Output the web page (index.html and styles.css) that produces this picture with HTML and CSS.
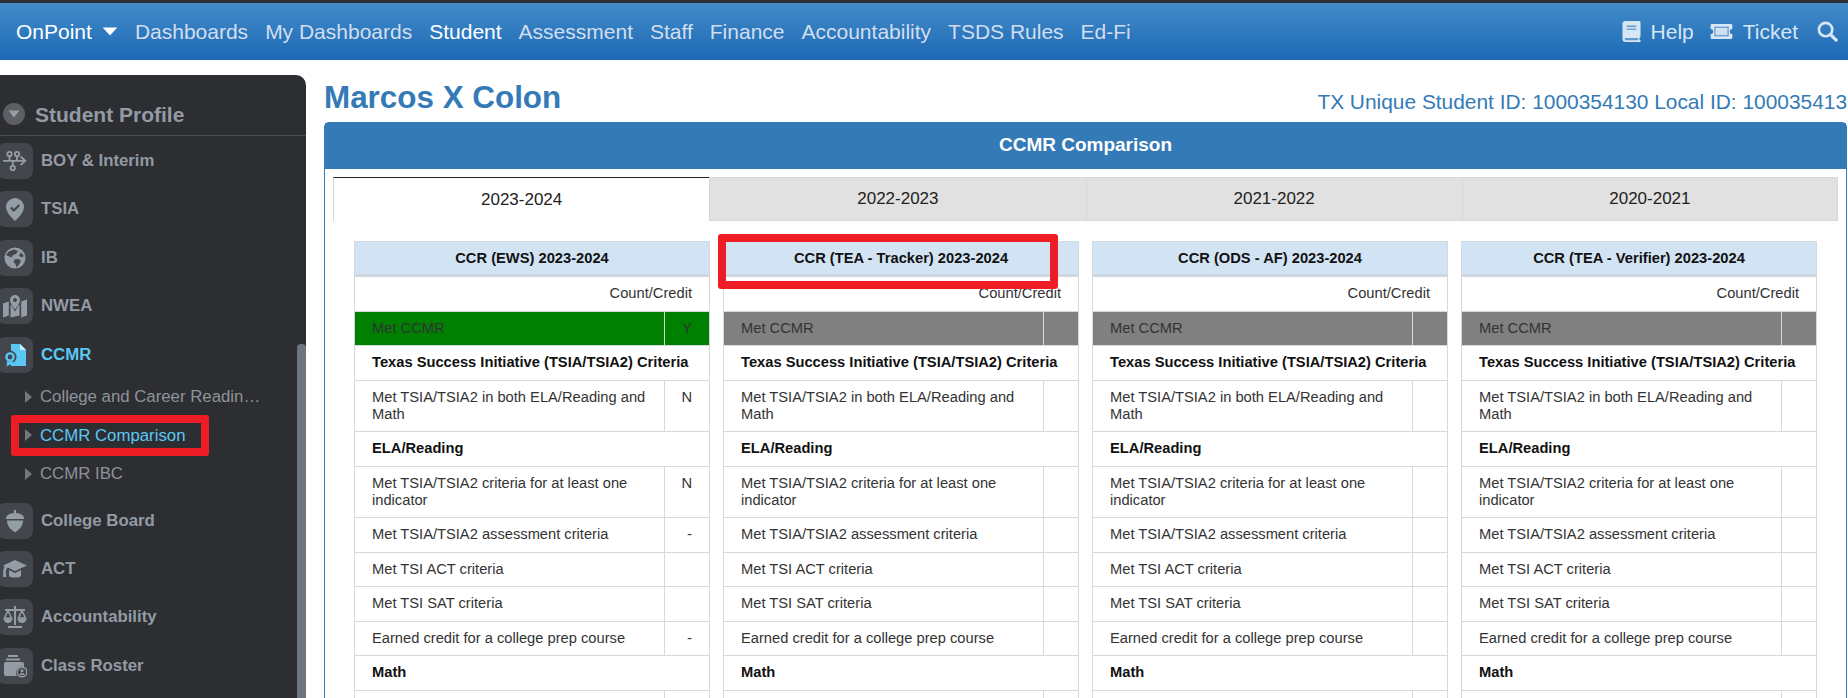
FILE: index.html
```html
<!DOCTYPE html>
<html lang="en">
<head>
<meta charset="utf-8">
<title>CCMR Comparison</title>
<link rel="stylesheet" href="styles.css">
</head>
<body>
<header class="topbar">
  <nav class="nav-left">
    <a class="nav-link is-on brand">OnPoint <svg class="caret" viewBox="0 0 14 8"><path d="M0.5 0.5h13L7 7.5z"/></svg></a>
    <a class="nav-link">Dashboards</a>
    <a class="nav-link">My Dashboards</a>
    <a class="nav-link is-on">Student</a>
    <a class="nav-link">Assessment</a>
    <a class="nav-link">Staff</a>
    <a class="nav-link">Finance</a>
    <a class="nav-link">Accountability</a>
    <a class="nav-link">TSDS Rules</a>
    <a class="nav-link">Ed-Fi</a>
  </nav>
  <nav class="nav-right">
    <a class="nav-link tool"><svg class="tool-icon book" viewBox="0 0 20 24"><path fill="#d6e6f5" d="M4 1h14a1.500 1.500 0 0 1 1.500 1.500V17a1.500 1.500 0 0 1-1 1.400V21h1v2H4a3.500 3.500 0 0 1-3.500-3.500v-15A3.500 3.500 0 0 1 4 1z"/><path stroke="#5f97cf" stroke-width="1.400" d="M5 6.500h10M5 9.500h10"/><path fill="#5f97cf" d="M4 18.800h13v2.300H4a1.150 1.150 0 0 1 0-2.300z"/></svg>Help</a>
    <a class="nav-link tool"><svg class="tool-icon ticket" viewBox="0 0 24 18"><path fill="#d6e6f5" d="M2 1h20a1.500 1.500 0 0 1 1.500 1.500v3.800a2.700 2.700 0 0 0 0 5.400v3.800A1.500 1.500 0 0 1 22 17H2a1.500 1.500 0 0 1-1.500-1.500v-3.800a2.700 2.700 0 0 0 0-5.400V2.500A1.500 1.500 0 0 1 2 1z"/><rect x="5" y="4.500" width="14" height="9" fill="#cfe0f1" stroke="#5f8fc8" stroke-width="1.200"/></svg>Ticket</a>
    <a class="search"><svg viewBox="0 0 22 22"><circle cx="9" cy="9" r="7" fill="none" stroke="#d6e6f5" stroke-width="2.800"/><path stroke="#d6e6f5" stroke-width="3.400" stroke-linecap="round" d="M14.500 14.500l5.500 5.500"/></svg></a>
  </nav>
</header>

<div class="shell">
  <aside class="sidebar">
    <div class="side-head">
      <span class="side-toggle"><svg viewBox="0 0 12 8"><path d="M0.500 0.500h11L6 7.500z"/></svg></span>
      <span class="side-title">Student Profile</span>
    </div>
    <ul class="side-list">
      <li class="side-item"><span class="tile"><svg viewBox="0 0 24 24" fill="none" stroke="#949da6" stroke-width="1.800"><circle cx="6.500" cy="5" r="2.200"/><circle cx="14" cy="5" r="2.200"/><circle cx="9.800" cy="19" r="2.200"/><path d="M0 11.800h21.500M17.500 7.500l4.800 4.300-4.800 4.300M6.500 7.500v4.300M14 7.500v4.300M9.800 11.800v5"/></svg></span>BOY &amp; Interim</li>
      <li class="side-item"><span class="tile"><svg viewBox="0 0 24 24"><path fill="#949da6" d="M12 1a9 9 0 0 1 9 9c0 5-5 10-9 14C8 20 3 15 3 10a9 9 0 0 1 9-9z"/><path fill="none" stroke="#43464c" stroke-width="2.200" d="M7.800 10.500l3 3 5.500-5.500"/></svg></span>TSIA</li>
      <li class="side-item"><span class="tile"><svg viewBox="0 0 24 24"><circle cx="12" cy="12" r="10.500" fill="#949da6"/><path fill="#43464c" d="M6 5.500l5-2 4 1.500-2 3-3 1-1.500 2.500-3.500-1.500-2-1zM11.500 13.500l4-.5 2.500 2-2 3.500-2.500 3-1-3.500-2-2zM18 6.500l3 3.500-2.500 1.500-2.500-2z"/></svg></span>IB</li>
      <li class="side-item"><span class="tile"><svg viewBox="0 0 24 24"><path fill="#949da6" d="M0 9.500l5.800-2v14L0 23.500zM7.500 11l1 .5 3.500 6 3.500-6 1-.5v10.500L7.500 23.500zM18.200 7.500L24 5.500v16l-5.800 2z"/><path fill="#949da6" fill-rule="evenodd" d="M12 1a5 5 0 0 1 5 5c0 3-3 7-5 9.500C10 13 7 9 7 6a5 5 0 0 1 5-5zm0 3a2 2 0 1 0 0 4 2 2 0 0 0 0-4z"/></svg></span>NWEA</li>
      <li class="side-item is-active"><span class="tile"><svg viewBox="0 0 24 24"><path fill="#5ac8f5" d="M8 1h9l6 6v16H8z"/><path fill="#c8eefb" d="M17 1l6 6h-6z"/><circle cx="7" cy="14" r="6.500" fill="#43464c"/><circle cx="7" cy="14" r="3.600" fill="none" stroke="#5ac8f5" stroke-width="2.400"/><path fill="#5ac8f5" d="M3.800 18.500h6.400v5L7 21.500l-3.200 2z"/></svg></span>CCMR</li>
      <li class="sub-wrap">
        <ul class="sub-list">
          <li class="sub-item"><span class="sub-text">College and Career Readiness Indicators</span></li>
          <li class="sub-item is-active"><span class="sub-text">CCMR Comparison</span><span class="side-mark"></span></li>
          <li class="sub-item"><span class="sub-text">CCMR IBC</span></li>
        </ul>
      </li>
      <li class="side-item"><span class="tile"><svg viewBox="0 0 24 24"><path fill="#949da6" d="M11 1h2v3h-2z"/><path fill="#949da6" d="M3 9a9 5 0 0 1 18 0v1H3z"/><path fill="#949da6" d="M4 11.500h16c0 6-4 9-8 12-4-3-8-6-8-12z"/></svg></span>College Board</li>
      <li class="side-item"><span class="tile"><svg viewBox="0 0 24 24"><path fill="#949da6" d="M12 3L24 8.500 12 14 4.500 10.500 2 15l-2-.5 1.500-5.500L0 8.500z"/><path fill="#949da6" d="M6 13l6 3 6-3v6c-2 2-10 2-12 0zM0.800 12h1.600l1 8H0z"/></svg></span>ACT</li>
      <li class="side-item"><span class="tile"><svg viewBox="0 0 24 24"><path stroke="#949da6" stroke-width="2" d="M12 1v19M2 5h20M5 22h14"/><path fill="none" stroke="#949da6" stroke-width="1.500" d="M5 5.500L1.500 13h7zM19 5.500L15.500 13h7z"/><path fill="#949da6" d="M0.500 13.500h9A4.500 4.500 0 0 1 .5 13.500zM14.500 13.500h9a4.500 4.500 0 0 1-9 0z"/></svg></span>Accountability</li>
      <li class="side-item"><span class="tile"><svg viewBox="0 0 24 24"><path fill="#949da6" d="M5 1h10v2H5zM3 4.500h14v2H3zM3 8h16a2 2 0 0 1 2 2v3a6 6 0 0 0-7 9H3a2 2 0 0 1-2-2V10a2 2 0 0 1 2-2z"/><circle cx="19" cy="18" r="4.800" fill="none" stroke="#949da6" stroke-width="1.400"/><circle cx="19" cy="16.800" r="1.500" fill="#949da6"/><path fill="#949da6" d="M16.500 21a2.500 2 0 0 1 5 0z"/></svg></span>Class Roster</li>
    </ul>
    <span class="side-scroll"></span>
  </aside>

  <main class="content">
    <div class="title-row">
      <h1 class="student-name">Marcos X Colon</h1>
      <div class="student-ids">TX Unique Student ID: 1000354130 Local ID: 100035413</div>
    </div>
    <section class="panel">
      <div class="panel-head">CCMR Comparison</div>
      <div class="panel-body">
        <div class="tabs">
          <div class="tab is-active">2023-2024</div>
          <div class="tab">2022-2023</div>
          <div class="tab">2021-2022</div>
          <div class="tab">2020-2021</div>
        </div>
        <div class="compare">

          <div class="compare-col wide-val">
            <table class="ccr">
              <colgroup><col><col class="val-col"></colgroup>
              <tr><th colspan="2">CCR (EWS) 2023-2024</th></tr>
              <tr><td colspan="2" class="val">Count/Credit</td></tr>
              <tr class="met green"><td>Met CCMR</td><td class="val sep">Y</td></tr>
              <tr class="sec"><td colspan="2">Texas Success Initiative (TSIA/TSIA2) Criteria</td></tr>
              <tr class="two"><td>Met TSIA/TSIA2 in both ELA/Reading and Math</td><td class="val sep">N</td></tr>
              <tr class="sec"><td colspan="2">ELA/Reading</td></tr>
              <tr class="two"><td>Met TSIA/TSIA2 criteria for at least one indicator</td><td class="val sep">N</td></tr>
              <tr><td>Met TSIA/TSIA2 assessment criteria</td><td class="val sep">-</td></tr>
              <tr><td>Met TSI ACT criteria</td><td class="val sep"></td></tr>
              <tr><td>Met TSI SAT criteria</td><td class="val sep"></td></tr>
              <tr><td>Earned credit for a college prep course</td><td class="val sep">-</td></tr>
              <tr class="sec"><td colspan="2">Math</td></tr>
              <tr class="stub"><td></td><td class="val sep"></td></tr>
            </table>
          </div>

          <div class="compare-col">
            <table class="ccr">
              <colgroup><col><col class="val-col"></colgroup>
              <tr><th colspan="2">CCR (TEA - Tracker) 2023-2024</th></tr>
              <tr><td colspan="2" class="val">Count/Credit</td></tr>
              <tr class="met"><td>Met CCMR</td><td class="val sep"></td></tr>
              <tr class="sec"><td colspan="2">Texas Success Initiative (TSIA/TSIA2) Criteria</td></tr>
              <tr class="two"><td>Met TSIA/TSIA2 in both ELA/Reading and Math</td><td class="val sep"></td></tr>
              <tr class="sec"><td colspan="2">ELA/Reading</td></tr>
              <tr class="two"><td>Met TSIA/TSIA2 criteria for at least one indicator</td><td class="val sep"></td></tr>
              <tr><td>Met TSIA/TSIA2 assessment criteria</td><td class="val sep"></td></tr>
              <tr><td>Met TSI ACT criteria</td><td class="val sep"></td></tr>
              <tr><td>Met TSI SAT criteria</td><td class="val sep"></td></tr>
              <tr><td>Earned credit for a college prep course</td><td class="val sep"></td></tr>
              <tr class="sec"><td colspan="2">Math</td></tr>
              <tr class="stub"><td></td><td class="val sep"></td></tr>
            </table>
            <span class="table-mark"></span>
          </div>

          <div class="compare-col">
            <table class="ccr">
              <colgroup><col><col class="val-col"></colgroup>
              <tr><th colspan="2">CCR (ODS - AF) 2023-2024</th></tr>
              <tr><td colspan="2" class="val">Count/Credit</td></tr>
              <tr class="met"><td>Met CCMR</td><td class="val sep"></td></tr>
              <tr class="sec"><td colspan="2">Texas Success Initiative (TSIA/TSIA2) Criteria</td></tr>
              <tr class="two"><td>Met TSIA/TSIA2 in both ELA/Reading and Math</td><td class="val sep"></td></tr>
              <tr class="sec"><td colspan="2">ELA/Reading</td></tr>
              <tr class="two"><td>Met TSIA/TSIA2 criteria for at least one indicator</td><td class="val sep"></td></tr>
              <tr><td>Met TSIA/TSIA2 assessment criteria</td><td class="val sep"></td></tr>
              <tr><td>Met TSI ACT criteria</td><td class="val sep"></td></tr>
              <tr><td>Met TSI SAT criteria</td><td class="val sep"></td></tr>
              <tr><td>Earned credit for a college prep course</td><td class="val sep"></td></tr>
              <tr class="sec"><td colspan="2">Math</td></tr>
              <tr class="stub"><td></td><td class="val sep"></td></tr>
            </table>
          </div>

          <div class="compare-col">
            <table class="ccr">
              <colgroup><col><col class="val-col"></colgroup>
              <tr><th colspan="2">CCR (TEA - Verifier) 2023-2024</th></tr>
              <tr><td colspan="2" class="val">Count/Credit</td></tr>
              <tr class="met"><td>Met CCMR</td><td class="val sep"></td></tr>
              <tr class="sec"><td colspan="2">Texas Success Initiative (TSIA/TSIA2) Criteria</td></tr>
              <tr class="two"><td>Met TSIA/TSIA2 in both ELA/Reading and Math</td><td class="val sep"></td></tr>
              <tr class="sec"><td colspan="2">ELA/Reading</td></tr>
              <tr class="two"><td>Met TSIA/TSIA2 criteria for at least one indicator</td><td class="val sep"></td></tr>
              <tr><td>Met TSIA/TSIA2 assessment criteria</td><td class="val sep"></td></tr>
              <tr><td>Met TSI ACT criteria</td><td class="val sep"></td></tr>
              <tr><td>Met TSI SAT criteria</td><td class="val sep"></td></tr>
              <tr><td>Earned credit for a college prep course</td><td class="val sep"></td></tr>
              <tr class="sec"><td colspan="2">Math</td></tr>
              <tr class="stub"><td></td><td class="val sep"></td></tr>
            </table>
          </div>

        </div>
      </div>
    </section>
  </main>
</div>
</body>
</html>
```

FILE: styles.css
```css
* { box-sizing: border-box; }

html, body {
  margin: 0;
  height: 100%;
  overflow: hidden;
}

body {
  display: flex;
  flex-direction: column;
  background: #fff;
  color: #333;
  font-family: "Liberation Sans", Arial, sans-serif;
}

/* top navigation */
.topbar {
  flex: none;
  height: 60px;
  display: flex;
  align-items: center;
  justify-content: space-between;
  border-top: 3px solid #2b2d31;
  padding: 0 10px 0 16px;
  background: linear-gradient(#428bca, #1d69b4);
}

.nav-left, .nav-right {
  display: flex;
  align-items: center;
  gap: 17px;
}

.nav-link {
  display: flex;
  align-items: center;
  font-size: 21px;
  line-height: 28px;
  color: #d2deef;
  white-space: nowrap;
}

.nav-link.is-on { color: #fff; }

.brand { gap: 10px; }

.caret {
  width: 16px;
  height: 9px;
  fill: #fff;
}

.nav-right { gap: 16px; }

.tool { gap: 10px; color: #d6e6f5; }

.tool-icon { flex: none; }
.book { width: 19px; height: 23px; }
.ticket { width: 23px; height: 17px; }

.search {
  display: flex;
  margin-left: 3px;
  width: 21px;
  height: 21px;
}

/* two-column shell */
.shell {
  flex: 1;
  min-height: 0;
  display: flex;
  gap: 18px;
  padding-top: 15px;
}

/* sidebar */
.sidebar {
  position: relative;
  flex: none;
  width: 306px;
  background: #2d2e32;
  border-top-right-radius: 10px;
  overflow: hidden;
  color: #929ba4;
}

.side-head {
  height: 61px;
  display: flex;
  align-items: flex-end;
  gap: 10px;
  padding: 0 0 10px 3px;
  border-bottom: 1px solid #4c4d51;
  font-size: 21px;
  font-weight: 700;
  line-height: 22px;
}

.side-title { margin-bottom: -1px; }

.side-toggle {
  width: 22px;
  height: 22px;
  border-radius: 50%;
  background: #5d5f64;
  display: flex;
  align-items: center;
  justify-content: center;
}

.side-toggle svg {
  width: 12px;
  height: 8px;
  fill: #979da4;
}

.side-list, .sub-list {
  list-style: none;
  margin: 0;
  padding: 0;
}

.side-list {
  display: flex;
  flex-direction: column;
  gap: 12.400px;
  padding-top: 7px;
}

.side-item {
  flex: none;
  height: 36px;
  display: flex;
  align-items: center;
  gap: 8px;
  font-size: 16.800px;
  font-weight: 700;
}

.side-item.is-active { color: #5ac8f5; }

.tile {
  flex: none;
  width: 36px;
  height: 36px;
  margin-left: -3px;
  border-radius: 8px;
  background: #43464c;
  display: flex;
  align-items: center;
  justify-content: center;
}

.tile svg {
  width: 24px;
  height: 24px;
}

.sub-wrap { margin: -7.600px 0 -2.700px; }

.sub-item {
  position: relative;
  height: 38.500px;
  display: flex;
  align-items: center;
  padding: 1px 40px 0 40px;
  font-size: 16.800px;
  color: #8d939a;
}

.sub-item::before {
  content: "";
  position: absolute;
  left: 25px;
  top: 50%;
  margin-top: -6px;
  border-left: 7px solid #74787e;
  border-top: 6px solid transparent;
  border-bottom: 6px solid transparent;
}

.sub-item.is-active { color: #5ac8f5; }

.sub-text {
  overflow: hidden;
  white-space: nowrap;
  text-overflow: ellipsis;
}

.side-mark {
  position: absolute;
  left: 11px;
  top: -1px;
  width: 198px;
  height: 41px;
  border: 8px solid #ee1c25;
  border-radius: 3px;
}

.side-scroll {
  position: absolute;
  right: 0;
  top: 269px;
  bottom: 0;
  width: 9px;
  background: #6f767f;
  border-top-left-radius: 4px;
  border-top-right-radius: 4px;
}

/* content */
.content {
  flex: 1;
  min-width: 0;
  padding-right: 1px;
  overflow: hidden;
}

.title-row {
  height: 47px;
  display: flex;
  justify-content: space-between;
  align-items: flex-start;
}

.student-name {
  margin: 0;
  padding-top: 4px;
  font-size: 31.400px;
  line-height: 38px;
  color: #337ab7;
  font-weight: 700;
}

.student-ids {
  padding-top: 15px;
  font-size: 20.900px;
  line-height: 23px;
  color: #337ab7;
  white-space: nowrap;
}

.panel {
  border: 1px solid #337ab7;
  border-top-left-radius: 5px;
  border-top-right-radius: 5px;
}

.panel-head {
  height: 46px;
  padding-bottom: 3px;
  display: flex;
  align-items: center;
  justify-content: center;
  background: #337ab7;
  color: #fff;
  font-size: 19px;
  font-weight: 700;
}

.panel-body { padding: 8px 8px 0; }

.tabs {
  display: grid;
  grid-template-columns: repeat(4, 1fr);
  height: 44px;
}

.tab {
  display: flex;
  align-items: center;
  justify-content: center;
  background: #e1e1e1;
  border: 1px solid #d5d8da;
  border-right-width: 0;
  font-size: 17px;
  color: #222;
}

.tab:last-child { border-right-width: 1px; }

.tab.is-active {
  background: #fff;
  border: 0;
  border-top: 1px solid #222;
  border-left: 1px solid #cfd6dc;
}

.compare {
  display: grid;
  grid-template-columns: repeat(4, 1fr);
  gap: 13px;
  padding: 20px 21px 0;
}

.compare-col { position: relative; }

.ccr {
  width: 100%;
  table-layout: fixed;
  border-collapse: separate;
  border-spacing: 0;
  border-left: 1px solid #d3dadf;
  border-right: 1px solid #d3dadf;
  font-size: 14.700px;
  line-height: 17px;
  color: #333;
}

.val-col { width: 35px; }
.wide-val .val-col { width: 45px; }

.ccr th {
  height: 36px;
  padding: 0 4px;
  background: #d2e3f3;
  border-top: 1px solid #d3dadf;
  border-bottom: 3px solid #cfd8e0;
  color: #111;
  font-weight: 700;
  text-align: center;
}

.ccr td {
  height: 34.500px;
  padding: 8px 17px;
  border-bottom: 1px solid #d3dadf;
}

.ccr .two td { height: 51.500px; vertical-align: top; }

.ccr .sec td {
  padding-right: 0;
  color: #111;
  font-weight: 700;
  white-space: nowrap;
}

.ccr .val { text-align: right; }

.ccr .sep {
  padding: 8px 17px 8px 0;
  border-left: 1px solid #d3dadf;
}

.ccr .met td {
  background: #808080;
  color: #333;
}

.ccr .met.green td { background: #008000; }

.table-mark {
  position: absolute;
  left: -5px;
  top: -7px;
  width: 340px;
  height: 55px;
  border: 8px solid #ee1c25;
  border-radius: 3px;
}
```
